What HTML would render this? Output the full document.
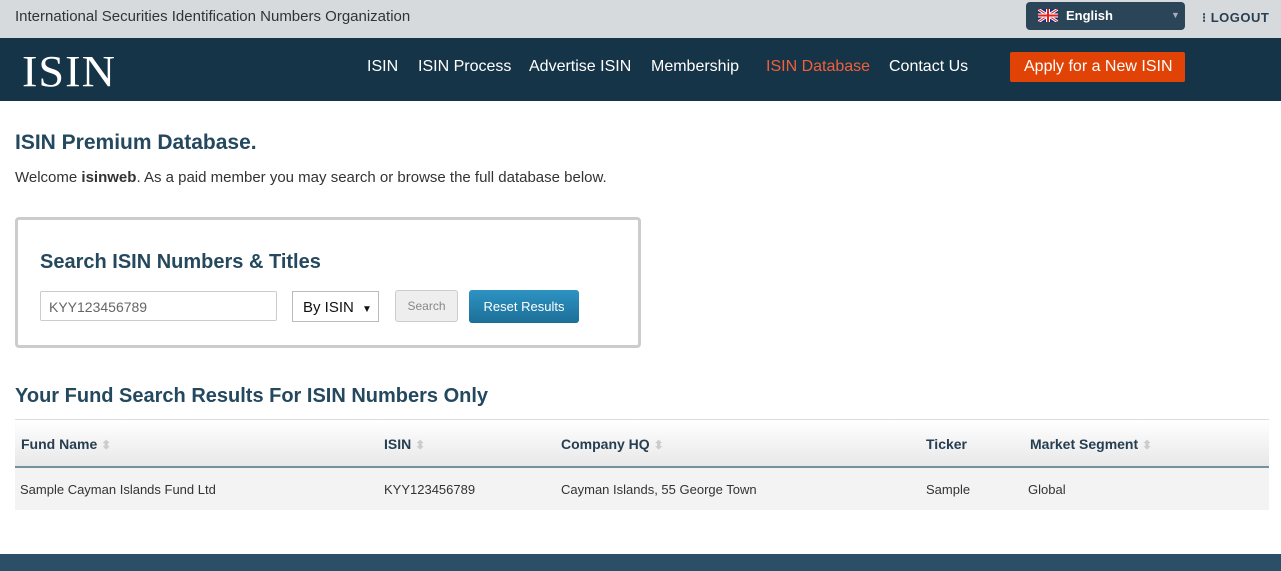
<!DOCTYPE html>
<html><head><style>
*{box-sizing:border-box;margin:0;padding:0}
body{width:1281px;height:571px;overflow:hidden;background:#fff;font-family:"Liberation Sans",sans-serif;color:#333;position:relative}
.top{height:38px;background:#d7dadd;position:relative}
.top .t{position:absolute;left:15px;top:8px;font-size:15px;color:#333}
.lang{position:absolute;left:1026px;top:2px;width:159px;height:28px;background:#2b4558;border-radius:4px;color:#fff;font-weight:bold;font-size:13px}
.lang span{position:absolute;left:40px;top:6px}
.flag{position:absolute;left:12px;top:7px;width:20px;height:13px;background:#1d2c7a}
.logout{position:absolute;left:1202px;top:10px;font-size:13px;font-weight:bold;color:#2b3e4f;letter-spacing:.5px}
.nav{height:63px;background:#163447;position:relative;color:#fff}
.logo{position:absolute;left:22px;top:8px;font-family:"Liberation Serif",serif;font-size:44px;color:#fff;letter-spacing:1px;transform:scaleX(1.05);transform-origin:left}
.nav a{position:absolute;top:20px;font-size:16px;color:#fff;white-space:nowrap}
.apply{position:absolute;left:1010px;top:14px;width:175px;height:30px;background:#e14307;border-radius:2px;color:#fff;font-size:16px;padding:6px 0 0 14px;white-space:nowrap}
h1{position:absolute;left:15px;top:131px;font-size:21px;color:#24485e}
.welcome{position:absolute;left:15px;top:169px;font-size:15px}
.box{position:absolute;left:15px;top:217px;width:626px;height:131px;border:3px solid #ccc;border-radius:4px}
.box h2{position:absolute;left:22px;top:31px;font-size:20px;color:#24485e}
.inp{position:absolute;left:22px;top:71px;width:237px;height:30px;border:1px solid #ccc;border-radius:2px;padding:7px 8px;font-size:14px;color:#666}
.sel{position:absolute;left:274px;top:71px;width:87px;height:31px;border:1px solid #bbb;padding:7px 10px;font-size:15px;color:#111;white-space:nowrap}
.sbtn{position:absolute;left:377px;top:70px;width:63px;height:32px;background:#eee;border:1px solid #ccc;border-radius:3px;font-size:12px;color:#888;text-align:center;padding-top:8px}
.rbtn{position:absolute;left:451px;top:70px;width:110px;height:33px;background:linear-gradient(#2d93c3,#1d6f98);border-radius:3px;color:#fff;font-size:13px;text-align:center;padding-top:9px}
h3{position:absolute;left:15px;top:385px;font-size:20px;color:#24485e}
.th{position:absolute;left:15px;top:419px;width:1254px;height:49px;border-top:1px solid #ddd;border-bottom:2px solid #7790a0;background:linear-gradient(#fff,#e8e8e8);font-weight:bold;font-size:14px;color:#263e50}
.tr{position:absolute;left:15px;top:468px;width:1254px;height:42px;background:#f3f3f3;font-size:13px}
.th span,.tr span{position:absolute;white-space:nowrap}
.th span{top:16px}.tr span{top:14px}
.s{position:static!important;color:#ccc;font-size:12px}
.foot{position:absolute;left:0;top:554px;width:1281px;height:17px;background:#2b4f66}
</style></head><body>
<div class="top"><div class="t">International Securities Identification Numbers Organization</div>
<div class="lang"><svg class="flag" viewBox="0 0 20 13" style="background:#1d2c7a"><path d="M0 0L20 13M20 0L0 13" stroke="#fff" stroke-width="3"/><path d="M0 0L20 13M20 0L0 13" stroke="#d22" stroke-width="1"/><path d="M10 0V13M0 6.5H20" stroke="#fff" stroke-width="4"/><path d="M10 0V13M0 6.5H20" stroke="#d22" stroke-width="2"/></svg><span>English</span><span style="left:145px;top:8px;font-size:9px;color:#aab">▼</span></div>
<div class="logout">⁝ LOGOUT</div></div>
<div class="nav"><div class="logo">ISIN</div>
<a style="left:367px">ISIN</a><a style="left:418px">ISIN Process</a><a style="left:529px">Advertise ISIN</a><a style="left:651px">Membership</a><a style="left:766px;color:#f0603a">ISIN Database</a><a style="left:889px">Contact Us</a>
<div class="apply">Apply for a New ISIN</div></div>
<h1>ISIN Premium Database.</h1>
<div class="welcome">Welcome <b>isinweb</b>. As a paid member you may search or browse the full database below.</div>
<div class="box"><h2>Search ISIN Numbers &amp; Titles</h2>
<div class="inp">KYY123456789</div><div class="sel">By ISIN <span style="font-size:10px;margin-left:4px">▼</span></div>
<div class="sbtn">Search</div><div class="rbtn">Reset Results</div></div>
<h3>Your Fund Search Results For ISIN Numbers Only</h3>
<div class="th"><span style="left:6px">Fund Name <span class="s">⬍</span></span><span style="left:369px">ISIN <span class="s">⬍</span></span><span style="left:546px">Company HQ <span class="s">⬍</span></span><span style="left:911px">Ticker</span><span style="left:1015px">Market Segment <span class="s">⬍</span></span></div>
<div class="tr"><span style="left:5px">Sample Cayman Islands Fund Ltd</span><span style="left:369px">KYY123456789</span><span style="left:546px">Cayman Islands, 55 George Town</span><span style="left:911px">Sample</span><span style="left:1013px">Global</span></div>
<div class="foot"></div>
</body></html>
